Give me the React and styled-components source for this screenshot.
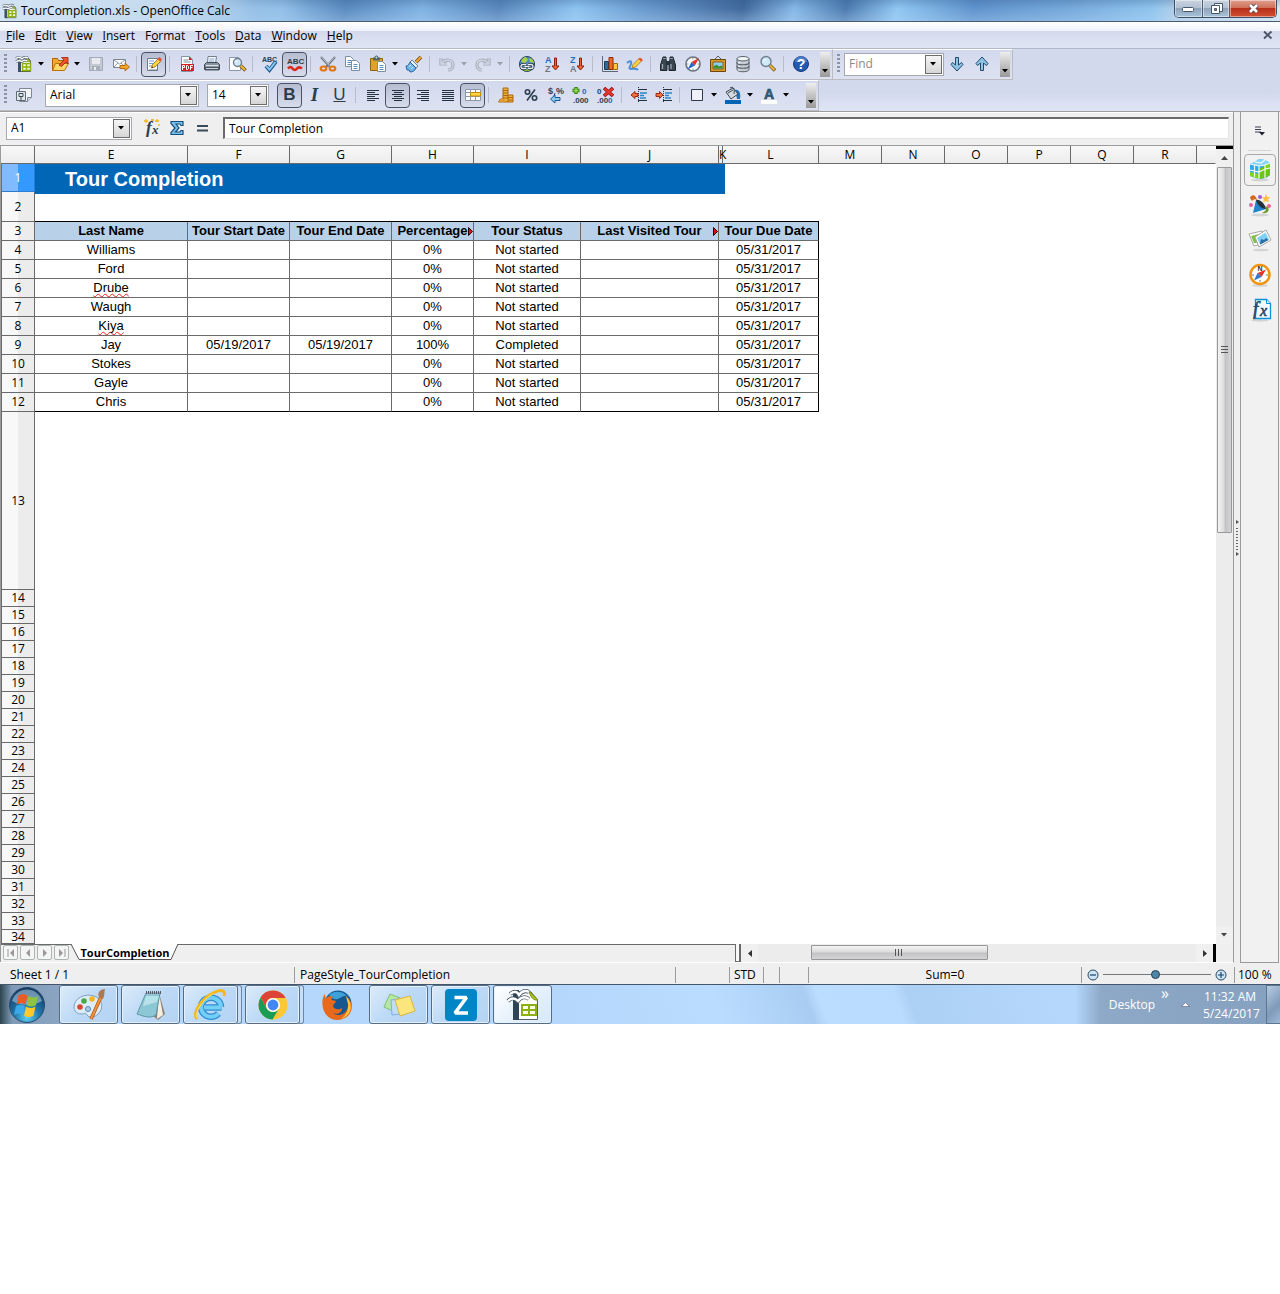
import React from 'react';
import styled, { createGlobalStyle, css } from 'styled-components';

const GlobalStyle = createGlobalStyle`
  *, *::before, *::after {
    box-sizing: border-box;
  }
  body {
    margin: 0;
    background: #fff;
    color: #000;
    font: 12px/16px "Open Sans", "Noto Sans", sans-serif;
  }
  button, input, select {
    font: inherit;
    color: inherit;
    margin: 0;
    padding: 0;
    border: 0;
    background: none;
    border-radius: 0;
    outline: none;
  }
  svg {
    overflow: visible;
  }
`;

/* ---------- icons ---------- */

const Svg = ({ size = 18, box = 18, children }) => (
  <svg width={size} height={size} viewBox={`0 0 ${box} ${box}`} fill="none" aria-hidden="true">
    {children}
  </svg>
);

const Page = ({ x, y, w = 8, h = 10 }) => (
  <>
    <path d={`M${x} ${y}h${w - 3}l3 3v${h - 3}h-${w}z`} fill="#fff" stroke="#7d8ea3" />
    <path d={`M${x + 2} ${y + 4}h${w - 4}M${x + 2} ${y + 6}h${w - 4}M${x + 2} ${y + 8}h${w - 4}`} stroke="#5b8fc4" />
  </>
);

const CalcIcon = ({ size }) => (
  <Svg size={size}>
    <path d="M3.500 2.500h9l3 3v11h-12z" fill="#fff" stroke="#4c5a66" />
    <path d="M3 5h3v12H3z" fill="#3d5263" />
    <path d="M11.500 2.500l4 4h-4z" fill="#a4c21d" stroke="#7b9410" strokeWidth=".7" />
    <path d="M7.500 8.500h8v7h-8zM11.500 8.500v7M7.500 12h8" fill="#f4f8d8" stroke="#8db012" strokeWidth="1.500" />
    <path d="M1 3.500c3-2 5-1 6 .500C8 2.500 11 1.500 13 3M1 6.500c3-1.500 4-1 6 0 2-1.500 4-1.500 5-.500" stroke="#53616d" strokeWidth="2.600" />
    <path d="M1 3.500c3-2 5-1 6 .500C8 2.500 11 1.500 13 3M1 6.500c3-1.500 4-1 6 0 2-1.500 4-1.500 5-.500" stroke="#fff" strokeWidth="1.300" />
  </Svg>
);

const OpenIcon = () => (
  <Svg>
    <path d="M1.500 15.500v-12h5l1 2h5v10z" fill="#f0a92e" stroke="#a65f0a" />
    <path d="M1.500 15.500l3-7h13l-4 7z" fill="#ffd766" stroke="#b86f0c" />
    <path d="M8 10l5-5-2.500-2.500H17V9l-2-2-4.500 4.500z" fill="#e9542b" stroke="#9c2408" strokeWidth=".8" />
  </Svg>
);

const SaveIcon = () => (
  <Svg>
    <path d="M2.500 2.500h13v13h-13z" fill="#c4c8d2" stroke="#a2a7b5" />
    <path d="M5 3h8v6H5z" fill="#e8eaf1" />
    <path d="M5 11h8v5H5z" fill="#a9aebb" />
    <path d="M7 12h2v3H7z" fill="#eceef4" />
  </Svg>
);

const MailIcon = () => (
  <Svg>
    <path d="M1.500 4.500h12v8h-12z" fill="#fbfbfb" stroke="#7c8794" />
    <path d="M2 5l5.500 4L13 5M2 12l4-4M13 12L9 8" stroke="#96a0ab" />
    <path d="M8 10.500h5V8l4.500 4-4.500 4v-2.500H8z" fill="#f3a526" stroke="#a9640a" strokeWidth=".9" />
  </Svg>
);

const EditIcon = () => (
  <Svg>
    <path d="M2.500 3.500h10v12h-10z" fill="#fff" stroke="#6d7a87" />
    <path d="M4 6h5M4 8.500h4M4 11h3" stroke="#68a0d8" />
    <path d="M4 15h9" stroke="#6d7a87" />
    <path d="M6.500 13l1-3.500 6-6 2.500 2.500-6 6z" fill="#ffcf45" stroke="#8e6a1c" strokeWidth=".8" />
    <path d="M12.500 4L14.500 2l2.500 2.500L15 6.500z" fill="#e2502f" />
    <path d="M6.500 13l.5-1.800 1.300 1.300z" fill="#333" />
  </Svg>
);

const PdfIcon = () => (
  <Svg>
    <path d="M3.500 1.500h8l3 3v12h-11z" fill="#fff" stroke="#8894a2" />
    <path d="M5.500 5h5M5.500 7h7" stroke="#7f8d9c" />
    <path d="M11 1.500l3.500 3.500H11z" fill="#d81e1e" />
    <path d="M3 9h13v7H3z" fill="#d81e1e" />
    <path d="M4.500 15v-4.500h2v2h-2M8.500 10.500v4h1l1-1v-2l-1-1zM12.500 15v-4.500H15M12.500 12.500h2" stroke="#fff" />
  </Svg>
);

const PrintIcon = () => (
  <Svg>
    <path d="M5 1.500h8.500l-1 7h-8z" fill="#f7f9fb" stroke="#727f8c" />
    <path d="M6.500 4h5M6 6h5" stroke="#86a9cf" />
    <path d="M1.500 9.500l2-2h11l2 2v5h-15z" fill="#8895a1" stroke="#3f4a55" />
    <path d="M2 12h14v3.500H2z" fill="#4c5863" />
    <path d="M3 10.500h12" stroke="#d9e0e6" />
    <path d="M3 13.500h12" stroke="#c6ced5" />
  </Svg>
);

const Lens = ({ x, y, r = 4 }) => (
  <>
    <path d={`M${x + r - 1} ${y + r - 1}l5 5`} stroke="#7a5a18" strokeWidth="3.500" />
    <path d={`M${x + r - 1} ${y + r - 1}l4.500 4.500`} stroke="#ecb53c" strokeWidth="2" />
    <circle cx={x} cy={y} r={r} fill="#cfe9f8" stroke="#6e7f8e" strokeWidth="1.400" />
    <path d={`M${x - 2} ${y}a2 2 0 0 1 2-2`} stroke="#fff" />
  </>
);

const PreviewIcon = () => (
  <Svg>
    <path d="M1.500 2.500h9l2 2v11h-11z" fill="#fff" stroke="#8b98a5" />
    <Lens x={9.500} y={7.500} r={4} />
  </Svg>
);

const SpellIcon = () => (
  <Svg>
    <text x="1" y="7" fontSize="7" fontWeight="700" fill="#2c3e4c" fontFamily="Liberation Sans">ABC</text>
    <path d="M5 11l3.500 4L15 6.500" stroke="#1f5d94" strokeWidth="3.800" />
    <path d="M5.300 11.200l3.200 3.300 6-7.500" stroke="#8ec9f2" strokeWidth="1.900" />
  </Svg>
);

const AutoSpellIcon = () => (
  <Svg>
    <text x="1" y="9" fontSize="8" fontWeight="700" fill="#2c3e4c" fontFamily="Liberation Sans">ABC</text>
    <path d="M2 13.500c2-2 3-2 4.500 0s3 2 4.500 0 3-1.500 5 0" stroke="#d9281c" strokeWidth="2.600" />
  </Svg>
);

const CutIcon = () => (
  <Svg>
    <path d="M2 2l9 10M16 2L7 12" stroke="#68747f" strokeWidth="2.200" />
    <path d="M2.500 2l8 9M15.500 2L9 9" stroke="#d5dce2" strokeWidth=".8" />
    <ellipse cx="4.500" cy="13.500" rx="2.800" ry="2" stroke="#e27616" strokeWidth="2.200" />
    <ellipse cx="13.500" cy="13.500" rx="2.800" ry="2" stroke="#e27616" strokeWidth="2.200" />
  </Svg>
);

const CopyIcon = () => (
  <Svg>
    <Page x={1.500} y={1.500} />
    <Page x={7.500} y={5.500} />
  </Svg>
);

const PasteIcon = () => (
  <Svg>
    <path d="M1.500 3.500h12v12h-12z" fill="#dfa32c" stroke="#8e6310" />
    <path d="M4 2.500h7v3H4z" fill="#59636d" />
    <circle cx="7.500" cy="2.500" r="1.500" fill="#c8ced4" stroke="#48525c" />
    <Page x={8.500} y={6.500} />
  </Svg>
);

const BrushIcon = () => (
  <Svg>
    <path d="M11 7l5-5" stroke="#6d4309" strokeWidth="3.400" />
    <path d="M11 7l5-5" stroke="#f2aa32" strokeWidth="2" />
    <path d="M7 5l6 6-2 2-6-6z" fill="#e6edf3" stroke="#47637d" strokeWidth=".8" />
    <path d="M5 7l6 6c-1 3-4 4-6 4l-1-2-2 0-1-4c2 0 3-2 4-4z" fill="#6db4e8" stroke="#225c92" strokeWidth=".9" />
    <path d="M4 12l2-2M6 14l2-2" stroke="#d6efff" />
  </Svg>
);

const UndoIcon = () => (
  <Svg>
    <path d="M3 3v6h6M4 8c3-4 11-4 11 2 0 3-2 5-5 5" stroke="#a6abba" strokeWidth="3.200" />
    <path d="M3 3v6h6M4 8c3-4 11-4 11 2 0 3-2 5-5 5" stroke="#d3d7e4" strokeWidth="1.300" />
  </Svg>
);

const RedoIcon = () => (
  <Svg>
    <g transform="matrix(-1 0 0 1 18 0)">
      <path d="M3 3v6h6M4 8c3-4 11-4 11 2 0 3-2 5-5 5" stroke="#a6abba" strokeWidth="3.200" />
      <path d="M3 3v6h6M4 8c3-4 11-4 11 2 0 3-2 5-5 5" stroke="#d3d7e4" strokeWidth="1.300" />
    </g>
  </Svg>
);

const LinkIcon = () => (
  <Svg>
    <circle cx="9" cy="9" r="7.500" fill="#4f8cc4" stroke="#24405c" />
    <path d="M3 7c1-4 4-5 5-5l2 3-3 3zM11 3c3 0 5 3 5 5l-4-1z" fill="#a9d345" />
    <path d="M4 14c3 3 7 3 10 0z" fill="#86b52c" />
    <path d="M8 9.500H5a2 2 0 0 0 0 4h3M10 9.500h3a2 2 0 0 1 0 4h-3M6.500 11.500h5" stroke="#22303c" strokeWidth="2.800" />
    <path d="M8 9.500H5a2 2 0 0 0 0 4h3M10 9.500h3a2 2 0 0 1 0 4h-3M6.500 11.500h5" stroke="#e7eef4" strokeWidth="1.300" />
  </Svg>
);

const SortIcon = ({ top, bottom }) => (
  <Svg>
    <text x="2" y="8" fontSize="9" fontWeight="700" fill="#1f72bd" fontFamily="Liberation Sans">{top}</text>
    <text x="2" y="17" fontSize="9" fontWeight="700" fill="#6f7780" fontFamily="Liberation Sans">{bottom}</text>
    <path d="M11.500 3h2v8h2.500L12.500 15 9 11h2.500z" fill="#f0612f" stroke="#8d1f0c" />
  </Svg>
);

const ChartIcon = () => (
  <Svg>
    <path d="M1.500 1v15.500H17" stroke="#5c6873" />
    <path d="M3.500 6.500h4v8h-4z" fill="#2d6b99" stroke="#173c58" />
    <path d="M8 2.500h4v12H8z" fill="#f0672a" stroke="#8f2a08" />
    <path d="M12.500 8.500h4v6h-4z" fill="#ffcb3c" stroke="#9c6d08" />
  </Svg>
);

const DrawIcon = () => (
  <Svg>
    <path d="M1 8c3-3 5-2 4 1s-3 5 0 5 5-1 7 1" stroke="#4a8fd8" strokeWidth="2" />
    <path d="M6 13l1-3.500 6-6 2.500 2.500-6 6z" fill="#ffcf45" stroke="#9a731c" strokeWidth=".8" />
    <path d="M12.500 4L14 2.500 17 5l-1.500 1.500z" fill="#e2502f" />
  </Svg>
);

const BinocularsIcon = () => (
  <Svg>
    <path d="M4 2h3v3l1 2v8.500H1.500V10zM14 2h-3v3l-1 2v8.500h6.500V10z" fill="#3a4650" stroke="#1d262e" />
    <path d="M7 6h4v4H7z" fill="#27313a" />
    <path d="M3.500 9v5M12 9v5" stroke="#9aa7b1" strokeWidth="1.300" />
    <path d="M4 3.500h3M11 3.500h3" stroke="#8b98a3" />
  </Svg>
);

const CompassIcon = () => (
  <Svg>
    <circle cx="9" cy="9" r="7" fill="#fdfdfd" stroke="#67727d" strokeWidth="1.600" />
    <path d="M9 3v1.500M9 13.500V15M3 9h1.500M13.500 9H15" stroke="#8b949c" />
    <path d="M15 3L7.500 7l3.500 3.500z" fill="#e3352a" />
    <path d="M3.500 14.500l4-7.500 3.500 3.500z" fill="#2669c4" />
  </Svg>
);

const GalleryIcon = () => (
  <Svg>
    <path d="M6 4l3-3 3 3" stroke="#56616c" />
    <path d="M1.500 4.500h15v12h-15z" fill="#d99a2c" stroke="#6d4708" />
    <path d="M4 7h10v7H4z" fill="#8fd0f6" stroke="#8a5c10" />
    <path d="M4.500 13.500v-2l3-2 2.500 2 2-1 1.500 1v2z" fill="#3f8f2f" />
  </Svg>
);

const DatabaseIcon = () => (
  <Svg>
    <path d="M3 4v10.500c0 3 12 3 12 0V4z" fill="#c6ccd1" stroke="#59636c" />
    <ellipse cx="9" cy="3.700" rx="6" ry="2.200" fill="#f4f6f7" stroke="#59636c" />
    <path d="M3 7.500c0 3 12 3 12 0M3 11c0 3 12 3 12 0" stroke="#59636c" strokeWidth="1.200" />
    <path d="M5 7v1.500M5 11v1M5 14.500v1" stroke="#fff" strokeWidth="1.500" />
  </Svg>
);

const ZoomIcon = () => (
  <Svg>
    <Lens x={7} y={6.500} r={5} />
  </Svg>
);

const HelpIcon = () => (
  <Svg>
    <circle cx="9" cy="9" r="7.500" fill="#2459b2" stroke="#16397a" />
    <path d="M3 7a6 6 0 0 1 12 0z" fill="#5d8bd4" opacity=".7" />
    <text x="9" y="14" textAnchor="middle" fontSize="14" fontWeight="700" fill="#fff" fontFamily="Liberation Sans">?</text>
  </Svg>
);

const StylesIcon = () => (
  <Svg>
    <path d="M4.500 2.500h12v9l-4 4h-8z" fill="#f2f4f7" stroke="#7d8a96" />
    <path d="M12.500 15.500v-4h4" fill="#cfd6dc" stroke="#7d8a96" />
    <path d="M1.500 5.500h9v9h-9z" fill="#dfe6ec" stroke="#5f6d79" />
    <path d="M4 7.500h4v3H4zM6 10.500V14" stroke="#3c4a56" />
  </Svg>
);

const AlignIcon = ({ d }) => (
  <Svg>
    <path d={d} stroke="#23323e" />
  </Svg>
);

const MergeIcon = () => (
  <Svg>
    <path d="M1.500 3.500h15v11h-15z" fill="#fff" stroke="#8b98a5" />
    <path d="M1.500 6.500h15M1.500 10.500h15M6.500 3.500v11M11.500 3.500v11" stroke="#8b98a5" />
    <path d="M6.500 6.500h10v3.500h-10z" fill="#ffd63f" stroke="#c78a10" />
  </Svg>
);

const CoinsIcon = () => (
  <Svg>
    <path d="M6 2h5v14H6zM11 9h5v7h-5z" fill="#f0b03a" />
    <path d="M6 4.500h5M6 7h5M6 9.500h5M6 12h5M11 11.500h5M11 14h5" stroke="#a9660c" />
    <path d="M6 2h5v14M11 9h5v7H1.500l2-3H6V2" stroke="#a9660c" />
    <path d="M2 15.500l2-2.500h3l2 2.500z" fill="#e79c23" />
  </Svg>
);

const PercentIcon = () => (
  <Svg>
    <circle cx="5.500" cy="6" r="2.200" stroke="#2c3e4c" strokeWidth="1.600" />
    <circle cx="12.500" cy="12" r="2.200" stroke="#2c3e4c" strokeWidth="1.600" />
    <path d="M13 3.500L5 14.500" stroke="#2c3e4c" strokeWidth="1.600" />
  </Svg>
);

const StandardFormatIcon = () => (
  <Svg>
    <text x="1" y="8" fontSize="9" fontWeight="700" fill="#2c3e4c" fontFamily="Liberation Sans">$</text>
    <text x="9" y="8" fontSize="9" fontWeight="700" fill="#2c3e4c" fontFamily="Liberation Sans">%</text>
    <path d="M8 7l-1 3" stroke="#2c3e4c" />
    <path d="M3.500 13l4.500-4v2.500h5v3H8V17z" fill="#8cc8f0" stroke="#1c5c92" />
  </Svg>
);

const AddDecimalIcon = () => (
  <Svg>
    <path d="M4 1v7M.5 4.500h7" stroke="#2c8a12" strokeWidth="3.400" />
    <path d="M4 2v5M1.500 4.500h5" stroke="#9be04c" strokeWidth="1.300" />
    <text x="10" y="8" fontSize="8" fontWeight="700" fill="#2b62c4" fontFamily="Liberation Sans">0</text>
    <text x="1" y="17" fontSize="8" fontWeight="700" fill="#2c3e4c" fontFamily="Liberation Sans">.000</text>
  </Svg>
);

const DeleteDecimalIcon = () => (
  <Svg>
    <text x="0" y="8" fontSize="8" fontWeight="700" fill="#2c3e4c" fontFamily="Liberation Sans">0</text>
    <text x="0" y="17" fontSize="8" fontWeight="700" fill="#2c3e4c" fontFamily="Liberation Sans">.00</text>
    <text x="11" y="17" fontSize="8" fontWeight="700" fill="#2b62c4" fontFamily="Liberation Sans">0</text>
    <path d="M7 2l9 8M16 2l-9 8" stroke="#8f0e0e" strokeWidth="3.600" />
    <path d="M7.500 2.500l8 7M15.500 2.500l-8 7" stroke="#f0382c" strokeWidth="2" />
  </Svg>
);

const IndentIcon = ({ decrease }) => (
  <Svg>
    <path d="M8 3.500h9M8 14.500h9" stroke="#23323e" />
    <path d="M8.500 1v16" stroke="#23323e" strokeDasharray="1 1" />
    <path d="M10 7h7M10 9.500h4M10 12h6" stroke="#2c86cc" strokeWidth="1.500" />
    <path
      d={decrease ? 'M1 9l4-3.500v2h3v3H5v2z' : 'M8 9L4.500 5.500v2H1v3h3.500v2z'}
      fill="#f0713f"
      stroke="#8d1f0c"
      strokeWidth=".9"
    />
  </Svg>
);

const BorderIcon = () => (
  <Svg>
    <path d="M3.500 3.500h11v11h-11z" fill="#eef1fa" stroke="#2d3a45" />
  </Svg>
);

const FillIcon = () => (
  <Svg>
    <path d="M11 4c4-1 6 3 5 9h-3z" fill="#1c73bd" />
    <path d="M2 6l7-4 5 6-7 5z" fill="#d4dadf" stroke="#3c4852" />
    <path d="M4 7l5-3M6 2c3-2 5 0 4 6" stroke="#3c4852" />
    <path d="M1 14h16v4H1z" fill="#0066b3" />
  </Svg>
);

const FontColorIcon = () => (
  <Svg>
    <text x="9" y="13" textAnchor="middle" fontSize="14" fontWeight="700" fill="#2f6386" stroke="#1d3546" strokeWidth=".5" fontFamily="Liberation Sans">A</text>
    <path d="M1 14h16v4H1z" fill="#fff" />
  </Svg>
);

const ArrowIcon = ({ up }) => (
  <Svg>
    <path
      d={up ? 'M7.500 15.500h3V8l3 2.500 1.500-2-6-6.500-6 6.500 1.500 2 3-2.500z' : 'M7.500 2.500h3V10l3-2.500 1.500 2L9 16 3 9.500l1.500-2 3 2.500z'}
      fill="#8fc3e4"
      stroke="#1f4a6b"
    />
  </Svg>
);

const FunctionIcon = () => (
  <Svg>
    <path d="M3 0v4M1 2h4M9 0v2M8 1h3M14 0v3M12 2h4M16 5v2" stroke="#f0b526" strokeWidth="1.300" />
    <text x="3" y="14" fontSize="17" fontStyle="italic" fontWeight="700" fill="#2c3e4c" fontFamily="Liberation Serif">f</text>
    <text x="9" y="15" fontSize="13" fontStyle="italic" fontWeight="700" fill="#2c3e4c" fontFamily="Liberation Serif">x</text>
  </Svg>
);

const SumIcon = () => (
  <Svg>
    <path d="M3 2.500h12v4h-2l-1-1.500H8L11 9l-3.500 4H12l1-1.500h2v4H3v-2L7 9 3 4.500z" fill="#7cc0ee" stroke="#14507e" strokeWidth="1.200" />
  </Svg>
);

const EqualsIcon = () => (
  <Svg>
    <path d="M4 7h11M4 11.500h11" stroke="#3a4b5a" strokeWidth="1.800" />
  </Svg>
);

const PropertiesIcon = () => (
  <Svg size={24} box={24}>
    <ellipse cx="12" cy="22" rx="9" ry="1.500" fill="#d4d4d4" />
    <path d="M2 6l5-2 4-3 6 1 5 3v12l-4 3-7 1-9-3z" fill="#2ea7ee" />
    <path d="M2 6l5-2 4-3 6 1 5 3-5 2-6 1z" fill="#8ad5fb" />
    <path d="M11 11l6-3 5 1v8l-5 3-6 1z" fill="#6bc416" />
    <path d="M2 14l9 2v5l-9-3z" fill="#7ed321" />
    <path d="M17 7l5-2v6l-5 2z" fill="#7ed321" />
    <path d="M2 12l9 2 6-3 5-1M6.500 7v12M11 8v13M17 7v13M2 6l9 2 6-1 5-2M7 4l6 1 4-3" stroke="#f4fbf0" strokeWidth="1.200" />
  </Svg>
);

const WizardIcon = () => (
  <Svg size={24} box={24}>
    <ellipse cx="12" cy="22" rx="9" ry="1.300" fill="#d4d4d4" />
    <path d="M5 20L8 7l10 9z" fill="#1f86cf" />
    <path d="M8 7c4-1 9 4 10 9-4 0-9-4-10-9z" fill="#263238" />
    <path d="M2 5c1-4 6-4 7 2-2-1-3-1-5 1z" fill="#d2691e" />
    <path d="M14 20c5 1 8-2 6-6l-3-1c2 3 1 5-3 7z" fill="#6a9c28" />
    <path d="M18 1l1.200 3 3.300.3-2.500 2 .8 3.200L18 8l-2.800 1.500.8-3.200-2.500-2 3.300-.3z" fill="#ffc04a" />
    <circle cx="12" cy="4" r="2" fill="#a05ad8" />
    <circle cx="3" cy="12" r="2" fill="#ee5fa7" />
    <circle cx="21" cy="13" r="2" fill="#f06292" />
  </Svg>
);

const PicturesIcon = () => (
  <Svg size={24} box={24}>
    <ellipse cx="13" cy="22" rx="8" ry="1.300" fill="#d4d4d4" />
    <path d="M1 6l13-3 4 12-12 3z" fill="#fff" stroke="#a8a8a8" />
    <path d="M3 8l8-2v9H6z" fill="#7cc43c" />
    <path d="M7 9l11-7 5 10-12 7z" fill="#fff" stroke="#a8a8a8" />
    <path d="M9 10l8.500-5.500 3.500 7-9 5z" fill="#7fd0f5" />
    <path d="M12 15.500l1-4.500 3 1 2-2 2.500 2-8 4.500z" fill="#2f6da6" />
  </Svg>
);

const NavigatorIcon = () => (
  <Svg size={24} box={24}>
    <ellipse cx="12" cy="22.500" rx="8" ry="1.300" fill="#d4d4d4" />
    <circle cx="12" cy="11.500" r="9.500" fill="#fff" stroke="#f0950f" strokeWidth="2.500" />
    <path d="M12 17v2M4 12h2M18 12h2" stroke="#777" />
    <text x="12" y="8" textAnchor="middle" fontSize="7" fontWeight="700" fill="#333" fontFamily="Liberation Sans">N</text>
    <path d="M18 6.500L9.500 10l4 4z" fill="#e3352a" />
    <path d="M6 17.500l3.500-7.500 4 4z" fill="#2f7ad0" />
  </Svg>
);

const FunctionsPanelIcon = () => (
  <Svg size={24} box={24}>
    <ellipse cx="12" cy="22.500" rx="9" ry="1.200" fill="#d4d4d4" />
    <path d="M7.500 1.500h11l4 4v15h-15z" fill="#f4fbff" stroke="#0f8fd6" strokeWidth="1.300" />
    <path d="M18.500 1.500v4h4" fill="#d7effc" stroke="#0f8fd6" />
    <text x="5" y="17" fontSize="19" fontStyle="italic" fill="#274b6d" stroke="#274b6d" strokeWidth=".6" fontFamily="Liberation Serif">f</text>
    <text x="12" y="18" fontSize="16" fontStyle="italic" fill="#274b6d" stroke="#274b6d" strokeWidth=".6" fontFamily="Liberation Serif">x</text>
  </Svg>
);

/* ---------- taskbar icons ---------- */

const StartOrb = () => (
  <Svg size={38} box={38}>
    <defs>
      <radialGradient id="orb" cx=".5" cy=".85" r=".8">
        <stop offset="0" stopColor="#5fd0f2" />
        <stop offset=".45" stopColor="#2177ab" />
        <stop offset="1" stopColor="#143c63" />
      </radialGradient>
    </defs>
    <circle cx="19" cy="19" r="17.500" fill="url(#orb)" stroke="#28496a" />
    <path d="M4 15a15.500 15.500 0 0 1 30 0c-9 5-20 5-30 0z" fill="#d6ecf8" opacity=".45" />
    <path d="M10.500 9.500c3-2 6-2 9 0l-2 9c-3-2-6-2-9 0z" fill="#ee5a24" />
    <path d="M20.500 10c3 2 6 2 9.500 0l-2 9c-3.500 2-6.500 2-9.500 0z" fill="#8cc63f" />
    <path d="M8 20c3-2 6-2 9 0l-2 9c-3-2-6-2-9 0z" fill="#3ba9e8" />
    <path d="M18 20.500c3 2 6 2 9.500 0l-2 9c-3.500 2-6.500 2-9.500 0z" fill="#fdc72f" />
  </Svg>
);

const PaintIcon = () => (
  <Svg size={34} box={34}>
    <path d="M2 19C2 10 13 5 22 8c9 3 10 13 4 18-4 4-9 4-11 1-1-3-3-1-6-1-4 0-7-3-7-7z" fill="#dcecf8" stroke="#7fa0bd" />
    <circle cx="8" cy="19" r="2.800" fill="#d9452f" />
    <circle cx="12" cy="13" r="2.800" fill="#4aa84a" />
    <circle cx="20" cy="11" r="2.800" fill="#f2b722" />
    <circle cx="16" cy="21" r="2.500" fill="#a8ccec" stroke="#5c88b3" />
    <path d="M29 9L19 31" stroke="#b25712" strokeWidth="3.500" />
    <path d="M29 9L19 31" stroke="#f2913d" strokeWidth="2" />
    <path d="M27 9c-2-4 1-8 6-8-1 4 0 6-2 10z" fill="#ab7a55" />
  </Svg>
);

const NotepadIcon = () => (
  <Svg size={34} box={34}>
    <path d="M25 5l6 21-7 6-5-4z" fill="#8c8376" />
    <path d="M25 5l4 22-6 4z" fill="#f4efe2" />
    <path d="M12 5h14l-4 22c-6 4-13 1-19-1z" fill="#8cc7d6" stroke="#5d95a6" />
    <path d="M12 8h13l-2 6-14 4z" fill="#c4e7ee" opacity=".8" />
    <path d="M12 4.500h15" stroke="#555d63" strokeWidth="3" strokeDasharray="1 1" />
  </Svg>
);

const ExplorerIcon = () => (
  <Svg size={36} box={36}>
    <path d="M28.500 20.500H12M28 20a10 9.500 0 1 0-2.500 6.500" stroke="#2f8fd4" strokeWidth="6.500" />
    <path d="M28 20.500H12M28 20a10 9.500 0 1 0-2.500 6.500" stroke="#74cff7" strokeWidth="4" />
    <path d="M4 32C-1 26 9 11 20 6c8-4 13-3 11 3" stroke="#f5b81c" strokeWidth="3" />
    <path d="M4 31C1 26 10 12 20 7" stroke="#fde276" />
  </Svg>
);

const ChromeIcon = () => (
  <Svg size={30} box={30}>
    <circle cx="15" cy="15" r="14.500" fill="#fcc934" />
    <path d="M2.400 7.800A14.500 14.500 0 0 1 27.700 8H15a7 7 0 0 0-6.100 10.500z" fill="#dc4437" />
    <path d="M2.400 7.800A14.500 14.500 0 0 0 14.500 29.500L21 18.500a7 7 0 0 1-12.100 0z" fill="#1a9c57" />
    <circle cx="15" cy="15" r="7" fill="#fff" />
    <circle cx="15" cy="15" r="5.400" fill="#4386f5" />
  </Svg>
);

const FirefoxIcon = () => (
  <Svg size={32} box={32}>
    <circle cx="17" cy="15" r="13.500" fill="#17578f" />
    <path d="M8 6c5-5 14-4 18 1-4-1-6 2-9 3s-6 0-9-4z" fill="#3f9fd8" />
    <path d="M1.500 16C1 11 2 7 4 5c0 2 0 3 1 4 2-2 5-2 7-1-1 1-2 2-1 3l4 1c0 2-3 3-3 5 1 4 7 4 9 2 0 5-5 7-9 5 7 5 15 0 15-8 1 2 0-6-2-9 5 4 7 10 5 15-2 6-8 9-14 9C8 31 2 24 1.500 16z" fill="#e8681c" />
    <path d="M25 7c5 5 6 12 3 17-2 3-5 5-8 6 5-4 8-9 7-15z" fill="#fcc53a" />
  </Svg>
);

const StickyIcon = () => (
  <Svg size={34} box={34}>
    <path d="M8 6l10 4-5 14-11-5z" fill="#b8e8a0" stroke="#7fc07a" />
    <path d="M9 12l13-2 3 15-15 2z" fill="#bfdcfa" stroke="#7fb0e0" />
    <path d="M13 12l15-4 5 15-15 5z" fill="#fbe57d" stroke="#dcb73a" />
  </Svg>
);

const ZTileIcon = () => (
  <Svg size={32} box={32}>
    <rect width="32" height="32" rx="4" fill="#0085c7" />
    <path d="M9.500 8.500h12L10 24h13" stroke="#fff" strokeWidth="3.600" strokeLinejoin="bevel" />
  </Svg>
);

const OfficeIcon = () => (
  <Svg size={32} box={32}>
    <path d="M7.500 2.500h16l7 8v20h-23z" fill="#fff" stroke="#59636b" />
    <path d="M6 1h6v30H6z" fill="#2e4356" />
    <path d="M22 2l9 9c-4 1-8-3-9-9z" fill="#a4c21d" stroke="#7b9410" />
    <path d="M14 15h16v12H14z" fill="#8db012" />
    <path d="M16 17h5v3h-5zM23 17h5v3h-5zM16 22h5v3h-5zM23 22h5v3h-5z" fill="#fbfde6" />
    <path d="M3 5c4-3 7-3 9 1 3-4 6-5 10-3M1 12c4-4 7-3 10 0 3-4 7-5 11-2" stroke="#4f5d69" strokeWidth="4" />
    <path d="M3 5c4-3 7-3 9 1 3-4 6-5 10-3M1 12c4-4 7-3 10 0 3-4 7-5 11-2" stroke="#fff" strokeWidth="2.400" />
  </Svg>
);

/* ---------- window frame ---------- */

const Window = styled.div`
  display: flex;
  flex-direction: column;
  width: 100%;
  background: #efefef;
`;

const TitleBar = styled.header`
  display: flex;
  height: 22px;
  padding-left: 2px;
  border-bottom: 1px solid #4a5a70;
  background:
    linear-gradient(90deg, #d3e3f3 0, #c3d9ee 14%, rgba(160, 195, 230, 0.4) 20%, transparent 24%),
    linear-gradient(180deg, rgba(40, 80, 130, 0.25) 0, transparent 40%, rgba(190, 220, 250, 0.3) 100%),
    linear-gradient(100deg, #9cc3e8 0, #8fbfe8 22%, #5b8bc0 27%, #7fb2e2 33%, #5a88bd 39%, #8ec4f0 45%,
      #6b9cd0 50%, #41699c 58%, #86b8e6 62%, #4d7bb0 66%, #90c7f2 70%, #5f93cc 76%, #78abdc 84%, #90c5ee 90%, #b8cfe6 92%, #dce8f3 100%);
`;

const Title = styled.h1`
  display: flex;
  flex: 1;
  align-items: center;
  gap: 3px;
  margin: 0;
  font-size: 12px;
  font-weight: 400;
`;

const WindowControls = styled.div`
  display: flex;
  height: 18px;
  margin-right: 3px;
  overflow: hidden;
  border: 1px solid #3d4f66;
  border-top: 0;
  border-radius: 0 0 5px 5px;
`;

const WindowButton = styled.button`
  display: grid;
  place-items: center;
  width: ${(p) => (p.$close ? 47 : 27)}px;
  border-left: ${(p) => (p.$first ? 0 : '1px solid #4b5e77')};
  box-shadow: inset 0 0 0 1px rgba(255, 255, 255, 0.45);
  background: ${(p) =>
    p.$close
      ? 'linear-gradient(#e0a090 0, #d0705a 45%, #b8301a 50%, #d05030 100%)'
      : 'linear-gradient(#c9d3e0 0, #b4c2d3 45%, #8fa3bb 50%, #a8c4da 100%)'};
`;

const MenuBar = styled.nav`
  display: flex;
  align-items: center;
  height: 27px;
  padding-left: 1px;
  border-bottom: 1px solid #b3b8c8;
  background: linear-gradient(#fff 0, #eef2fa 9px, #d4daed 9px, #e0e5f5 100%);
`;

const MenuButton = styled.button`
  padding: 2px 5px 0;
`;

const CloseDocument = styled.button`
  display: grid;
  margin-left: auto;
  padding: 0 7px;
`;

const ToolbarArea = styled.div`
  display: flex;
  flex-direction: column;
  border-bottom: 1px solid #9c9c9c;
  background: linear-gradient(#d3d9ed 0, #d3d9ed 70%, #e0e5f5 100%);
`;

const ToolbarRow = styled.div`
  display: flex;
`;

const Toolbar = styled.div`
  display: flex;
  align-items: center;
  height: 31px;
  padding: 0 0 1px 4px;
  border-top: 1px solid #fff;
  border-right: 1px solid #bcbcc0;
  border-bottom: 1px solid #bcbcc0;
  background: linear-gradient(#d3d9ed, #dde2f2);
`;

const Grip = styled.i`
  width: 3px;
  height: 20px;
  margin-right: 4px;
  background: repeating-linear-gradient(#8d93a5 0 2px, transparent 2px 4px);
`;

const ToolButton = styled.button`
  display: grid;
  place-items: center;
  width: 25px;
  height: 25px;
  ${(p) =>
    p.$pressed &&
    css`
      border: 1px solid #4c5263;
      border-radius: 4px;
      background: linear-gradient(#b6bdd2, #d8ddec);
    `}
`;

const Letter = styled.span`
  color: #2c3e4c;
  font-family: ${(p) => (p.$sans ? '"Liberation Sans", sans-serif' : '"Liberation Serif", serif')};
  font-size: ${(p) => (p.$sans ? 17 : 19)}px;
  font-style: ${(p) => (p.$italic ? 'italic' : 'normal')};
  font-weight: ${(p) => (p.$light ? 400 : 700)};
  line-height: 20px;
  text-decoration: ${(p) => (p.$underline ? 'underline' : 'none')};
`;

const DropButton = styled.button`
  display: grid;
  place-items: center;
  width: 11px;
  height: 25px;
`;

const Divider = styled.i`
  width: 1px;
  height: 16px;
  margin: 0 4px 0 3px;
  background: #b9bdc9;
`;

const Overflow = styled.button`
  display: flex;
  align-items: flex-end;
  justify-content: center;
  width: 10px;
  height: 25px;
  margin: 0 2px 0 ${(p) => p.$space || 7}px;
  padding-bottom: 4px;
  background: linear-gradient(#eee, #999);
`;

const Combo = styled.div`
  display: flex;
  align-items: center;
  width: ${(p) => p.$width}px;
  height: 23px;
  margin-right: ${(p) => p.$after || 0}px;
  margin-left: ${(p) => p.$before || 0}px;
  padding: 1px;
  border: 1px solid #a5a8ad;
  background: #fff;
  color: ${(p) => (p.$muted ? '#8a8a8a' : '#000')};

  select,
  input {
    flex: 1;
    min-width: 0;
    padding-left: 3px;
    appearance: none;
  }
  input::placeholder {
    color: #8a8a8a;
    opacity: 1;
  }
`;

const ComboArrow = styled.span`
  display: grid;
  place-items: center;
  width: 17px;
  height: 19px;
  border: 1px solid #6d6d6d;
  background: linear-gradient(#f5f5f5, #d6d6d6);
`;

const Caret = ({ color = '#000' }) => (
  <svg width="7" height="4" viewBox="0 0 7 4" aria-hidden="true">
    <path d="M0 0h6L3 3.500z" fill={color} />
  </svg>
);

/* ---------- workspace ---------- */

const Workspace = styled.div`
  display: flex;
`;

const SheetColumn = styled.div`
  display: flex;
  flex: 1;
  flex-direction: column;
  min-width: 0;
  border-right: 1px solid #9b9b9b;
  border-bottom: 1px solid #fff;
`;

const FormulaBar = styled.div`
  display: flex;
  align-items: center;
  height: 34px;
  padding: 0 4px 2px 6px;
  border-top: 1px solid #fff;
  border-bottom: 1px solid #9b9b9b;
`;

const FormulaInput = styled.input`
  flex: 1;
  min-width: 0;
  height: 22px;
  margin-left: 9px;
  padding-left: 4px;
  border: 1px solid #e3e3e3;
  border-top: 2px solid #6a6a6a;
  border-left: 2px solid #6a6a6a;
  background: #fff;
`;

const SheetArea = styled.div`
  display: flex;
  border-left: 1px solid #9b9b9b;
`;

const SheetView = styled.div`
  flex: 1;
  min-width: 0;
  overflow: hidden;
  background: #fff;
`;

const Sheet = styled.table`
  width: 100%;
  table-layout: fixed;
  border-spacing: 0;
  border-collapse: separate;

  th,
  td {
    padding: 0;
    white-space: nowrap;
    text-align: center;
  }
`;

const ColumnHead = styled.th`
  height: 18px;
  border-right: 1px solid ${(p) => (p.$last ? 'transparent' : '#6a6a6a')};
  border-bottom: 1px solid #6a6a6a;
  background: linear-gradient(#f8f8f8, #ececec);
  font-weight: 400;
  line-height: 17px;
`;

const RowHead = styled.th`
  height: ${(p) => p.$height}px;
  border: 1px solid #6a6a6a;
  border-top: 0;
  background: linear-gradient(90deg, #f8f8f8 50%, #ececec 50%);
  font-weight: 400;
  line-height: 12px;
  ${(p) =>
    p.$selected &&
    css`
      border-color: #2b7cd3;
      background: linear-gradient(90deg, #80bbff 50%, #3399ff 50%);
      color: #fff;
    `}
`;

const Banner = styled.div`
  position: relative;
  height: 30px;
  margin: 0 94px -2px 0;
  padding-left: 30px;
  background: #0066b5;
  color: #fff;
  font: 700 20px/30px "Liberation Sans", Arial, sans-serif;
  text-align: left;
`;

const HeadCell = styled.td`
  position: relative;
  height: 19px;
  border-right: 1px solid ${(p) => (p.$last ? '#000' : '#6a6a6a')};
  border-bottom: 1px solid #6a6a6a;
  box-shadow: 0 -1px 0 #000;
  background: #b9d1e8;
  font: 700 13px/18px "Liberation Sans", Arial, sans-serif;
`;

const MoreMark = styled.span`
  position: absolute;
  top: 5px;
  right: 0;
  display: grid;
`;

const Cell = styled.td`
  height: 19px;
  border-right: 1px solid ${(p) => (p.$last ? '#000' : '#6a6a6a')};
  border-bottom: 1px solid ${(p) => (p.$bottom ? '#000' : '#6a6a6a')};
  font: 13px/18px "Liberation Sans", Arial, sans-serif;
`;

const Misspelled = styled.span`
  text-decoration: underline wavy #e02020 1px;
  text-decoration-skip-ink: none;
`;

const VerticalBar = styled.div`
  display: flex;
  flex-direction: column;
  align-items: center;
  width: 17px;
  border-top: 3px solid #000;
  background: #ececec;
`;

const BarButton = styled.button`
  display: grid;
  place-items: center;
  width: 17px;
  height: 18px;
  background: #f0f0f0;
`;

const VerticalThumb = styled.div`
  display: grid;
  place-items: center;
  width: 15px;
  height: 46%;
  border: 1px solid #979797;
  border-radius: 1px;
  background: linear-gradient(90deg, #f4f4f4, #dcdcde 45%, #c3c3c6 55%, #d4d4d6);
`;

const VerticalTrack = styled.div`
  flex: 1;
`;

const BottomBar = styled.div`
  display: flex;
  align-items: stretch;
  height: 18px;
  border-left: 1px solid #9b9b9b;
`;

const TabArea = styled.div`
  display: flex;
  flex: 736 1 0;
  padding-left: 2px;
  border-top: 1px solid #6a6a6a;
`;

const TabNav = styled.button`
  display: grid;
  place-items: center;
  width: 15px;
  height: 15px;
  margin: 0 2px 0 0;
  border: 1px solid #aeb3b3;
  border-radius: 2px;
  background: #f5f5f5;
`;

const SheetTab = styled.button`
  position: relative;
  display: flex;
  align-items: center;
  justify-content: center;
  width: 108px;
  height: 17px;
  margin-top: -1px;
  font-size: 11px;
  font-weight: 700;

  svg {
    position: absolute;
    inset: 0;
  }
  span {
    position: relative;
  }
`;

const HorizontalArea = styled.div`
  display: flex;
  flex: 480 1 0;
  margin-right: 17px;
  border-right: 3px solid #000;
  background: #ececec;
`;

const SplitHandle = styled.i`
  width: 6px;
  border: 1px solid #6a6a6a;
  border-width: 0 2px 1px 1px;
  background: #f8f8f8;
`;

const HorizontalTrack = styled.div`
  flex: 1;
  padding-left: 11%;
`;

const HorizontalThumb = styled.div`
  display: grid;
  place-items: center;
  width: 46%;
  height: 15px;
  margin-top: 1px;
  border: 1px solid #979797;
  border-radius: 1px;
  background: linear-gradient(#f4f4f4, #dcdcde 45%, #c3c3c6 55%, #d4d4d6);
`;

const Splitter = styled.div`
  display: grid;
  place-items: center;
  width: 6px;
  background: #efefef;
`;

const Sidebar = styled.aside`
  display: flex;
  flex-direction: column;
  align-items: center;
  gap: 3px;
  width: 39px;
  margin-right: 1px;
  padding-top: 8px;
  border: 1px solid #9b9b9b;
  border-top: 0;
  background: #f1f1f1;
`;

const SidebarMenu = styled.button`
  display: grid;
  place-items: center;
  width: 23px;
  height: 31px;
  padding-bottom: 9px;
  border-bottom: 1px solid #d5d5d5;
`;

const SidebarButton = styled.button`
  display: grid;
  place-items: center;
  width: 32px;
  height: 32px;
  border: 1px solid ${(p) => (p.$active ? '#a8a8a8' : 'transparent')};
  border-radius: 4px;
`;

/* ---------- status bar ---------- */

const StatusBar = styled.footer`
  display: flex;
  align-items: center;
  height: 21px;
  padding: 2px 0 0 10px;
`;

const StatusCell = styled.div`
  display: flex;
  align-items: center;
  justify-content: ${(p) => (p.$center ? 'center' : 'flex-start')};
  flex: ${(p) => (p.$grow ? `${p.$grow} 1 0` : `0 0 ${p.$width}px`)};
  min-width: 0;
  height: 16px;
  padding-left: ${(p) => (p.$first || p.$center ? 0 : p.$pad || 5)}px;
  border-left: ${(p) => (p.$first ? 0 : '1px solid #9b9b9b')};
  white-space: nowrap;
`;

const ZoomControls = styled(StatusCell)`
  padding-right: 7px;
`;

const ZoomSlider = styled.input`
  flex: 1;
  min-width: 0;
  height: 12px;
  margin: 0 4px;
  appearance: none;
  background: linear-gradient(#777, #777) center / 100% 1px no-repeat;

  &::-webkit-slider-thumb {
    width: 9px;
    height: 9px;
    appearance: none;
    border: 1px solid #1f3f58;
    border-radius: 50%;
    background: #4f86a8;
  }
`;

const RoundButton = styled.button`
  display: grid;
`;

const ZoomStep = ({ label, d }) => (
  <RoundButton aria-label={label}>
    <svg width="12" height="12" viewBox="0 0 12 12" fill="none">
      <circle cx="6" cy="6" r="5" fill="#cfe4f5" stroke="#2b4b66" />
      <path d={d} stroke="#16446c" strokeWidth="1.200" />
    </svg>
  </RoundButton>
);

/* ---------- taskbar ---------- */

const Taskbar = styled.div`
  display: flex;
  height: 40px;
  border-top: 1px solid #44566b;
  background:
    linear-gradient(90deg, #2c4450 0, #7f9ab6 12px, #8ba5c2 60px, transparent 60px),
    linear-gradient(90deg, transparent 84%, #8ea9c8 86%, #86a1c0 100%),
    linear-gradient(70deg, #b5d7fb 0, #b5d7fb 44%, #b9dcff 56%, #a9cdf2 63%, #bbddff 64%, #b9dbfe 70%, #acd0f4 71%, #b4d7fb 82%);
`;

const StartButton = styled.button`
  display: grid;
  place-items: center;
  width: 54px;
  margin-right: 5px;
`;

const TaskButton = styled.button`
  display: grid;
  place-items: center;
  width: ${(p) => (p.$stacked ? 55 : 59)}px;
  height: 39px;
  margin-right: ${(p) => (p.$stacked ? 7 : 3)}px;
  overflow: hidden;
  ${(p) =>
    !p.$plain &&
    css`
      border: 1px solid #566c85;
      border-radius: 3px;
      background: linear-gradient(135deg, #dcebf9 0, #bcd9f6 50%, #b4d3f3 100%);
      box-shadow: inset 0 0 0 1px #e4f1fd${p.$stacked ? ', 4px 0 0 -1px #c6def7, 4px 0 0 0 #6f86a0' : ''};
    `}
  ${(p) =>
    p.$active &&
    css`
      background: linear-gradient(135deg, #fff 0, #e6f1fc 50%, #d6e8fa 100%);
    `}
`;

const Tray = styled.div`
  display: flex;
  align-items: center;
  margin-left: auto;
  color: #fff;
`;

const TrayMore = styled.span`
  align-self: flex-start;
  margin: 0 12px 0 6px;
  font-size: 16px;
  line-height: 16px;
`;

const Clock = styled.div`
  width: 54px;
  margin: 0 9px 0 13px;
  line-height: 17px;
  text-align: center;
  white-space: nowrap;
`;

const ShowDesktop = styled.button`
  width: 14px;
  height: 39px;
  border: 1px solid #5d7690;
  border-right: 0;
  background: linear-gradient(135deg, #b7cbe0, #7e9ab8 60%, #9cb9d6);
`;

/* ---------- data ---------- */

const menus = ['File', 'Edit', 'View', 'Insert', 'Format', 'Tools', 'Data', 'Window', 'Help'];
const accelerators = { Format: 1 };

const standardTools = [
  ['New', <CalcIcon />], 'drop',
  ['Open', <OpenIcon />], 'drop',
  ['Save', <SaveIcon />],
  ['E-mail', <MailIcon />], '|',
  ['Edit File', <EditIcon />, true], '|',
  ['Export PDF', <PdfIcon />],
  ['Print', <PrintIcon />],
  ['Page Preview', <PreviewIcon />], '|',
  ['Spellcheck', <SpellIcon />],
  ['AutoSpellcheck', <AutoSpellIcon />, true], '|',
  ['Cut', <CutIcon />],
  ['Copy', <CopyIcon />],
  ['Paste', <PasteIcon />], 'drop',
  ['Format Paintbrush', <BrushIcon />], '|',
  ['Undo', <UndoIcon />], 'dropOff',
  ['Redo', <RedoIcon />], 'dropOff', '|',
  ['Hyperlink', <LinkIcon />],
  ['Sort Ascending', <SortIcon top="A" bottom="Z" />],
  ['Sort Descending', <SortIcon top="Z" bottom="A" />], '|',
  ['Chart', <ChartIcon />],
  ['Draw', <DrawIcon />], '|',
  ['Find & Replace', <BinocularsIcon />],
  ['Navigator', <CompassIcon />],
  ['Gallery', <GalleryIcon />],
  ['Data Sources', <DatabaseIcon />],
  ['Zoom', <ZoomIcon />], '|',
  ['Help', <HelpIcon />],
];

const formatTools = [
  ['Bold', <Letter $sans>B</Letter>, true],
  ['Italic', <Letter $italic>I</Letter>],
  ['Underline', <Letter $sans $light $underline>U</Letter>], '|',
  ['Align Left', <AlignIcon d="M3 4.500h12M3 6.500h8M3 8.500h12M3 10.500h8M3 12.500h12M3 14.500h8" />],
  ['Center', <AlignIcon d="M3 4.500h12M5 6.500h8M3 8.500h12M5 10.500h8M3 12.500h12M5 14.500h8" />, true],
  ['Align Right', <AlignIcon d="M3 4.500h12M7 6.500h8M3 8.500h12M7 10.500h8M3 12.500h12M7 14.500h8" />],
  ['Justified', <AlignIcon d="M3 4.500h12M3 6.500h12M3 8.500h12M3 10.500h12M3 12.500h12M3 14.500h12" />],
  ['Merge Cells', <MergeIcon />, true], '|',
  ['Currency', <CoinsIcon />],
  ['Percent', <PercentIcon />],
  ['Standard', <StandardFormatIcon />],
  ['Add Decimal', <AddDecimalIcon />],
  ['Delete Decimal', <DeleteDecimalIcon />], '|',
  ['Decrease Indent', <IndentIcon decrease />],
  ['Increase Indent', <IndentIcon />], '|',
  ['Borders', <BorderIcon />], 'drop',
  ['Background Color', <FillIcon />], 'drop',
  ['Font Color', <FontColorIcon />], 'drop',
];

const columns = [
  ['E', 153], ['F', 102], ['G', 102], ['H', 82], ['I', 107], ['J', 138], ['K', 4], ['L', 96],
  ['M', 63], ['N', 63], ['O', 63], ['P', 63], ['Q', 63], ['R', 63],
];

const headings = [
  'Last Name', 'Tour Start Date', 'Tour End Date', 'Percentage', 'Tour Status', 'Last Visited Tour', 'Tour Due Date',
];
const clipped = ['Percentage', 'Last Visited Tour'];

const notStarted = ['', '', '0%', 'Not started', '', '05/31/2017'];
const people = [
  ['Williams', ...notStarted],
  ['Ford', ...notStarted],
  ['Drube', ...notStarted],
  ['Waugh', ...notStarted],
  ['Kiya', ...notStarted],
  ['Jay', '05/19/2017', '05/19/2017', '100%', 'Completed', '', '05/31/2017'],
  ['Stokes', ...notStarted],
  ['Gayle', ...notStarted],
  ['Chris', ...notStarted],
];
const misspelled = ['Drube', 'Kiya'];

const emptyRows = Array.from({ length: 22 }, (_, i) => i + 13);
const rowHeight = (n) => (n === 13 ? 178 : n === 34 ? 14 : 17);

const tasks = [
  ['Paint', <PaintIcon />],
  ['Notepad', <NotepadIcon />],
  ['Internet Explorer', <ExplorerIcon />, { $stacked: true }],
  ['Chrome', <ChromeIcon />, { $stacked: true }],
  ['Firefox', <FirefoxIcon />, { $plain: true }],
  ['Sticky Notes', <StickyIcon />],
  ['Z', <ZTileIcon />],
  ['OpenOffice', <OfficeIcon />, { $active: true }],
];

/* ---------- parts ---------- */

const Tools = ({ items }) =>
  items.map((item, i) => {
    if (item === '|') return <Divider key={i} />;
    if (item === 'drop' || item === 'dropOff') {
      return (
        <DropButton key={i} aria-label="More options">
          <Caret color={item === 'drop' ? '#000' : '#9a9fac'} />
        </DropButton>
      );
    }
    const [label, icon, pressed] = item;
    return (
      <ToolButton key={i} aria-label={label} aria-pressed={!!pressed} $pressed={pressed}>
        {icon}
      </ToolButton>
    );
  });

const MenuLabel = ({ name }) => {
  const at = accelerators[name] || 0;
  return (
    <>
      {name.slice(0, at)}
      <u>{name[at]}</u>
      {name.slice(at + 1)}
    </>
  );
};

const SelectBox = ({ label, value, ...rest }) => (
  <Combo {...rest}>
    <select aria-label={label} defaultValue={value}>
      <option>{value}</option>
    </select>
    <ComboArrow>
      <Caret />
    </ComboArrow>
  </Combo>
);

const Spreadsheet = () => (
  <Sheet>
    <colgroup>
      <col style={{ width: 34 }} />
      {columns.map(([name, width]) => (
        <col key={name} style={{ width }} />
      ))}
      <col />
    </colgroup>
    <thead>
      <tr>
        <ColumnHead aria-label="Select all" />
        {columns.map(([name]) => (
          <ColumnHead key={name} scope="col">{name}</ColumnHead>
        ))}
        <ColumnHead aria-label="Next column" $last />
      </tr>
    </thead>
    <tbody>
      <tr>
        <RowHead scope="row" $height={28} $selected>1</RowHead>
        <td colSpan={8}>
          <Banner>Tour Completion</Banner>
        </td>
      </tr>
      <tr>
        <RowHead scope="row" $height={30}>2</RowHead>
      </tr>
      <tr>
        <RowHead scope="row" $height={19}>3</RowHead>
        {headings.map((name, i) => (
          <HeadCell key={name} colSpan={i === 6 ? 2 : 1} $last={i === 6}>
            {name}
            {clipped.includes(name) && (
              <MoreMark>
                <svg width="5" height="9" aria-hidden="true">
                  <path d="M.5.5v8l4-4z" fill="#e01010" stroke="#200" />
                </svg>
              </MoreMark>
            )}
          </HeadCell>
        ))}
      </tr>
      {people.map((person, r) => (
        <tr key={person[0]}>
          <RowHead scope="row" $height={19}>{r + 4}</RowHead>
          {person.map((value, i) => (
            <Cell key={i} colSpan={i === 6 ? 2 : 1} $last={i === 6} $bottom={r === people.length - 1}>
              {misspelled.includes(value) ? <Misspelled>{value}</Misspelled> : value}
            </Cell>
          ))}
        </tr>
      ))}
      {emptyRows.map((n) => (
        <tr key={n}>
          <RowHead scope="row" $height={rowHeight(n)}>{n}</RowHead>
        </tr>
      ))}
    </tbody>
  </Sheet>
);

const App = () => (
  <>
    <GlobalStyle />
    <Window>
      <TitleBar>
        <Title>
          <CalcIcon size={16} />
          TourCompletion.xls - OpenOffice Calc
        </Title>
        <WindowControls>
          <WindowButton aria-label="Minimize" $first>
            <svg width="13" height="4"><rect x=".5" y=".5" width="11" height="4" rx="1" fill="#fff" stroke="#46566c" /></svg>
          </WindowButton>
          <WindowButton aria-label="Restore">
            <svg width="13" height="13" fill="none">
              <path d="M4.500 1.500h8v8h-8z" fill="#fff" stroke="#46566c" />
              <path d="M1.500 3.500h8v8h-8z" fill="#fff" stroke="#46566c" />
              <path d="M4.500 6.500h2v2h-2z" fill="#8097b0" stroke="#46566c" />
            </svg>
          </WindowButton>
          <WindowButton aria-label="Close" $close>
            <svg width="13" height="11" fill="none">
              <path d="M3 2l7 7M10 2L3 9" stroke="#5a4a56" strokeWidth="4.500" />
              <path d="M3 2l7 7M10 2L3 9" stroke="#fff" strokeWidth="2.600" />
            </svg>
          </WindowButton>
        </WindowControls>
      </TitleBar>

      <MenuBar>
        {menus.map((name) => (
          <MenuButton key={name}>
            <MenuLabel name={name} />
          </MenuButton>
        ))}
        <CloseDocument aria-label="Close document">
          <svg width="10" height="10" fill="none">
            <path d="M1 1.500l7.500 7M8.500 1.500L1 8.500" stroke="#4a5468" strokeWidth="1.800" />
          </svg>
        </CloseDocument>
      </MenuBar>

      <ToolbarArea>
        <ToolbarRow>
          <Toolbar>
            <Grip />
            <Tools items={standardTools} />
            <Overflow aria-label="More standard tools"><Caret /></Overflow>
          </Toolbar>
          <Toolbar>
            <Grip />
            <Combo $width={100} $muted>
              <input aria-label="Find" placeholder="Find" />
              <ComboArrow><Caret /></ComboArrow>
            </Combo>
            <ToolButton aria-label="Find next"><ArrowIcon /></ToolButton>
            <ToolButton aria-label="Find previous"><ArrowIcon up /></ToolButton>
            <Overflow aria-label="More find tools" $space={6}><Caret /></Overflow>
          </Toolbar>
        </ToolbarRow>
        <ToolbarRow>
          <Toolbar>
            <Grip />
            <ToolButton aria-label="Styles and Formatting"><StylesIcon /></ToolButton>
            <SelectBox label="Font Name" value="Arial" $width={154} $before={9} $after={8} />
            <SelectBox label="Font Size" value="14" $width={62} $after={8} />
            <Tools items={formatTools} />
            <Overflow aria-label="More formatting tools" $space={14}><Caret /></Overflow>
          </Toolbar>
        </ToolbarRow>
      </ToolbarArea>

      <Workspace>
        <SheetColumn>
          <FormulaBar>
            <SelectBox label="Name Box" value="A1" $width={126} $after={7} />
            <ToolButton aria-label="Function Wizard"><FunctionIcon /></ToolButton>
            <ToolButton aria-label="Sum"><SumIcon /></ToolButton>
            <ToolButton aria-label="Function"><EqualsIcon /></ToolButton>
            <FormulaInput aria-label="Input line" defaultValue="Tour Completion" />
          </FormulaBar>
          <SheetArea>
            <SheetView>
              <Spreadsheet />
            </SheetView>
            <VerticalBar>
              <BarButton aria-label="Scroll up">
                <svg width="7" height="4"><path d="M0 4h7L3.500 0z" fill="#444" /></svg>
              </BarButton>
              <VerticalThumb>
                <svg width="7" height="8"><path d="M0 .5h7M0 3.500h7M0 6.500h7" stroke="#555" /></svg>
              </VerticalThumb>
              <VerticalTrack />
              <BarButton aria-label="Scroll down"><Caret color="#444" /></BarButton>
            </VerticalBar>
          </SheetArea>
          <BottomBar>
            <TabArea>
              <TabNav aria-label="First sheet"><svg width="8" height="8"><path d="M1 0v8" stroke="#999" /><path d="M7 0v8L3 4z" fill="#999" /></svg></TabNav>
              <TabNav aria-label="Previous sheet"><svg width="8" height="8"><path d="M6 0v8L2 4z" fill="#999" /></svg></TabNav>
              <TabNav aria-label="Next sheet"><svg width="8" height="8"><path d="M2 0v8l4-4z" fill="#999" /></svg></TabNav>
              <TabNav aria-label="Last sheet"><svg width="8" height="8"><path d="M7 0v8" stroke="#999" /><path d="M1 0v8l4-4z" fill="#999" /></svg></TabNav>
              <SheetTab>
                <svg width="108" height="17" fill="none">
                  <path d="M0 0l8 16h92l7-16z" fill="#fff" />
                  <path d="M0 0l8 15.500h92l7-15.500" stroke="#555" />
                </svg>
                <span>TourCompletion</span>
              </SheetTab>
            </TabArea>
            <HorizontalArea>
              <SplitHandle />
              <BarButton aria-label="Scroll left">
                <svg width="4" height="7"><path d="M4 0v7L0 3.500z" fill="#333" /></svg>
              </BarButton>
              <HorizontalTrack>
                <HorizontalThumb>
                  <svg width="8" height="7"><path d="M.5 0v7M3.500 0v7M6.500 0v7" stroke="#555" /></svg>
                </HorizontalThumb>
              </HorizontalTrack>
              <BarButton aria-label="Scroll right">
                <svg width="4" height="7"><path d="M0 0v7l4-3.500z" fill="#333" /></svg>
              </BarButton>
            </HorizontalArea>
          </BottomBar>
        </SheetColumn>
        <Splitter>
          <svg width="5" height="36" fill="none">
            <path d="M2 8v22" stroke="#666" strokeDasharray="1 2" strokeWidth="2" />
            <path d="M1 0v4l3-2zM1 32v4l3-2z" fill="#555" />
          </svg>
        </Splitter>
        <Sidebar>
          <SidebarMenu aria-label="Sidebar settings">
            <svg width="11" height="10" fill="none">
              <path d="M1 1h6M1 3.500h6M1 6h6" stroke="#3c3f52" />
              <path d="M5 6h6L8 9.500z" fill="#1d2133" />
            </svg>
          </SidebarMenu>
          <SidebarButton aria-label="Properties" $active><PropertiesIcon /></SidebarButton>
          <SidebarButton aria-label="Styles"><WizardIcon /></SidebarButton>
          <SidebarButton aria-label="Gallery"><PicturesIcon /></SidebarButton>
          <SidebarButton aria-label="Navigator"><NavigatorIcon /></SidebarButton>
          <SidebarButton aria-label="Functions"><FunctionsPanelIcon /></SidebarButton>
        </Sidebar>
      </Workspace>

      <StatusBar>
        <StatusCell $first $grow={285}>Sheet 1 / 1</StatusCell>
        <StatusCell $grow={376}>PageStyle_TourCompletion</StatusCell>
        <StatusCell $width={54} />
        <StatusCell $width={34} $pad={4}>STD</StatusCell>
        <StatusCell $width={16} />
        <StatusCell $width={29} />
        <StatusCell $grow={273} $center>Sum=0</StatusCell>
        <ZoomControls $width={153}>
          <ZoomStep label="Zoom out" d="M3 6h6" />
          <ZoomSlider type="range" aria-label="Zoom" min="0" max="100" defaultValue="48" />
          <ZoomStep label="Zoom in" d="M3 6h6M6 3v6" />
        </ZoomControls>
        <StatusCell $width={46} $pad={3}>100 %</StatusCell>
      </StatusBar>

      <Taskbar>
        <StartButton aria-label="Start"><StartOrb /></StartButton>
        {tasks.map(([name, icon, look]) => (
          <TaskButton key={name} aria-label={name} {...look}>{icon}</TaskButton>
        ))}
        <Tray>
          <span>Desktop</span>
          <TrayMore>»</TrayMore>
          <svg width="9" height="5" aria-hidden="true"><path d="M.5 4.500h8L4.500.5z" fill="#fff" stroke="#4c6078" strokeWidth=".6" /></svg>
          <Clock>
            11:32 AM
            <br />
            5/24/2017
          </Clock>
          <ShowDesktop aria-label="Show desktop" />
        </Tray>
      </Taskbar>
    </Window>
  </>
);

export default App;
